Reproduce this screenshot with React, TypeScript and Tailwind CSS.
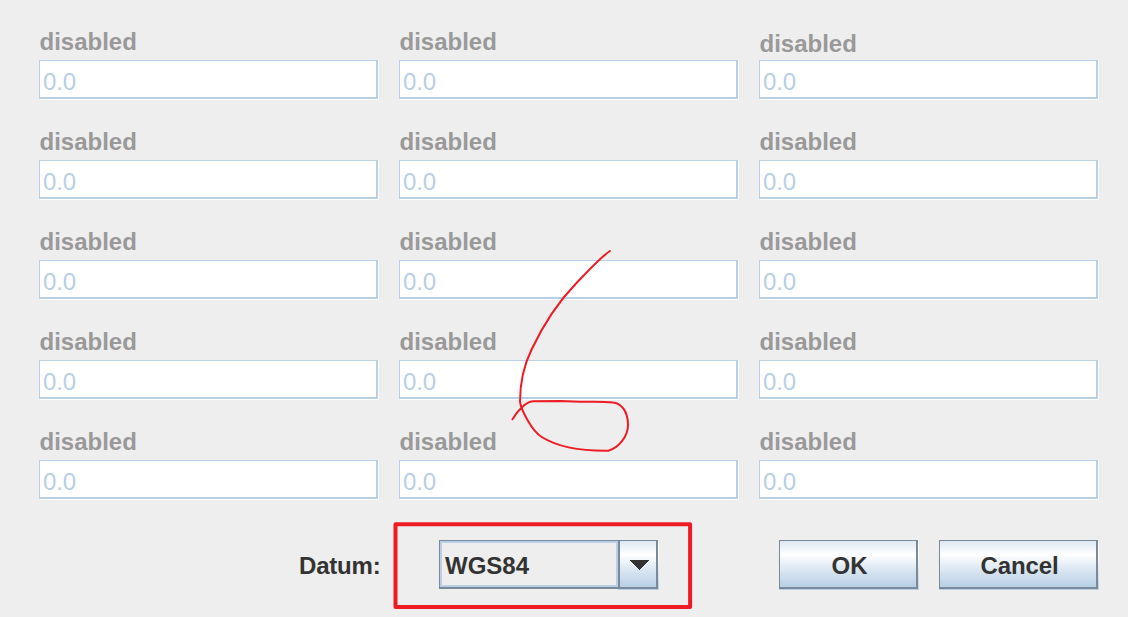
const columns = ['left', 'middle', 'right'];

const rows = [0, 1, 2, 3, 4];

type FieldProps = {
  label: string;
  lowered?: boolean;
};

const DisabledField = ({ label, lowered }: FieldProps) => {
  return (
    <div className="h-[100px] w-[339px]">
      <div className={`h-[30px] pl-[0.5px] text-[24px] leading-6 font-bold text-[#999999] ${lowered ? 'pt-[2px]' : ''}`}>
        {label}
      </div>
      <div className="h-[39px] border border-r-2 border-b-2 border-[#b8cfe5] bg-white pt-[9px] pl-[3px] text-[24px] leading-6 tracking-[-0.1px] text-[#b8cfe5] shadow-[1px_1px_0_0_#ffffff]">
        0.0
      </div>
    </div>
  );
};

const DialogButton = ({ label, className }: { label: string; className: string }) => {
  return (
    <div className={`h-[50px] bg-linear-to-b from-white from-30% to-[#b8cfe5] pr-px pb-px ${className}`}>
      <button className="flex h-[49px] w-full items-start justify-center border border-r-2 border-b-2 border-[#7a8a99] bg-linear-[180deg,#dde8f3_0%,#ffffff_30%,#dde8f3_60%,#b8cfe5_100%] pt-[13px] pl-[3px] text-[24px] leading-6 font-bold tracking-[-0.1px]">
        {label}
      </button>
    </div>
  );
};

const DatumSelect = () => {
  return (
    <div className="ml-[59px] flex h-[50px] w-[220px]">
      <div className="h-[49px] w-[179px] border border-r-0 border-b-2 border-[#7a8a99]">
        <div className="h-[46px] border-2 border-[#b8cfe5] pt-[11px] pl-[3px] text-[24px] leading-6 font-bold">
          WGS84
        </div>
      </div>
      <div className="h-[50px] w-[41px] bg-linear-to-b from-white from-30% to-[#b8cfe5] pr-px pb-px">
        <div className="h-[49px] border-2 border-t border-[#7a8a99] bg-linear-[180deg,#dde8f3_0%,#ffffff_30%,#dde8f3_60%,#b8cfe5_100%] pt-[19px] pl-[9px]">
          <svg width="20" height="10" viewBox="0 0 20 10" shapeRendering="crispEdges">
            <path d="M0 0H20L10 10Z" fill="#333333" />
          </svg>
        </div>
      </div>
    </div>
  );
};

// Red pen marks drawn over the form
const Annotation = () => {
  return (
    <svg
      className="pointer-events-none absolute inset-0"
      width="1128"
      height="617"
      viewBox="0 0 1128 617"
      fill="none"
      stroke="#ed1c24"
      strokeLinecap="round"
      strokeLinejoin="round"
    >
      <path
        strokeWidth="2"
        d="M610 251C603 255 590 269 576.7 282.7C559 301 545 321 531.7 349.3C523 367 520 382 520 401.7C521 410 532 431 541.7 437C556 446 580 451 608.3 450.7C619 448 628 436 628 425C628 411 621 403 613 402.4C602 401.3 591 401.8 580 401.8L560 400.9L533 401.3C526 402 518 410 512.5 419.3"
      />
      <rect x="395.5" y="524.3" width="294.6" height="82.7" strokeWidth="4" />
    </svg>
  );
};

const App = () => {
  return (
    <div className="relative h-[617px] w-[1128px] overflow-hidden bg-[#eeeeee] font-['Liberation_Sans',Arial,sans-serif] text-[#333333]">
      <div className="flex gap-[21px] pt-[30px] pl-[39px]">
        {columns.map((column) => (
          <div key={column}>
            {rows.map((row) => (
              <DisabledField key={row} label="disabled" lowered={column === 'right' && row === 0} />
            ))}
          </div>
        ))}
      </div>
      <div className="mt-[10px] flex pl-[299px]">
        <div className="w-[81px] pt-[14px] text-[24px] leading-6 font-bold tracking-[-0.2px]">Datum:</div>
        <DatumSelect />
        <DialogButton label="OK" className="ml-[120px] w-[140px]" />
        <DialogButton label="Cancel" className="ml-[20px] w-[160px]" />
      </div>
      <Annotation />
    </div>
  );
};

export default App;
